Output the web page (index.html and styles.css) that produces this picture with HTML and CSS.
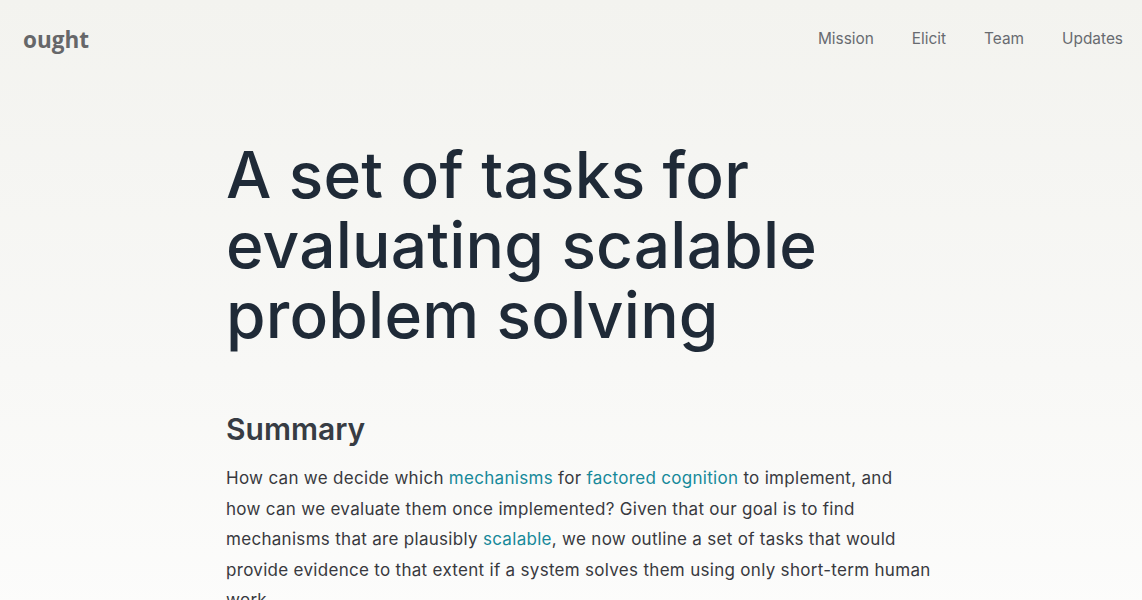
FILE: index.html
```html
<!DOCTYPE html>
<html lang="en">

<head>
    <meta charset="UTF-8">
    <meta name="viewport" content="width=device-width, initial-scale=1.0">
    <title>A set of tasks for evaluating scalable problem solving - Ought</title>
    <link rel="stylesheet" href="styles.css">
</head>

<body>
    <header class="site-header">
        <a class="logo" href="#">ought</a>
        <nav class="site-nav">
            <a href="#">Mission</a>
            <a href="#">Elicit</a>
            <a href="#">Team</a>
            <a href="#">Updates</a>
        </nav>
    </header>

    <main class="post">
        <h1 class="post-title">A set of tasks for evaluating scalable problem solving</h1>

        <h2>Summary</h2>
        <p>
            How can we decide which <a href="#">mechanisms</a> for <a href="#">factored cognition</a> to implement, and
            how can we evaluate them once implemented? Given that our goal is to find
            mechanisms that are plausibly <a href="#">scalable</a>, we now outline a set of tasks that would
            provide evidence to that extent if a system solves them using only short-term human
            work.
        </p>
    </main>
</body>

</html>
```

FILE: styles.css
```css
/* Reset some default styles */
body, h1, h2, p {
    margin: 0;
    padding: 0;
}

body {
    font-family: 'Inter', 'Liberation Sans', sans-serif;
    color: #38393e;
    background: linear-gradient(180deg, #f3f3ef 0%, #f8f8f6 60%, #fcfcfb 100%);
    min-height: 100vh;
}

a {
    text-decoration: none;
}

/* Header */
.site-header {
    display: flex;
    justify-content: space-between;
    align-items: center;
    height: 76px;
    padding: 0 19px 0 23px;
}

.logo {
    font-family: 'Open Sans', sans-serif;
    font-weight: 700;
    font-size: 22.5px;
    color: #666769;
    margin-top: 3px;
}

.site-nav {
    display: flex;
    gap: 38px;
}

.site-nav a {
    font-size: 15.4px;
    color: #686b70;
}

/* Post */
.post {
    max-width: 705.5px;
    margin: 0 auto;
    padding-left: 15.5px;
    padding-top: 64px;
}

.post-title {
    font-size: 64px;
    font-weight: 500;
    line-height: 70px;
    letter-spacing: 0.2px;
    color: #1f2a37;
    max-width: 640px;
    margin-bottom: 61px;
}

h2 {
    font-size: 30px;
    font-weight: 600;
    line-height: 36px;
    color: #373c44;
    margin-bottom: 16px;
}

p {
    font-size: 17px;
    line-height: 30.6px;
    letter-spacing: 0.3px;
}

p a {
    color: #16899a;
}
```
